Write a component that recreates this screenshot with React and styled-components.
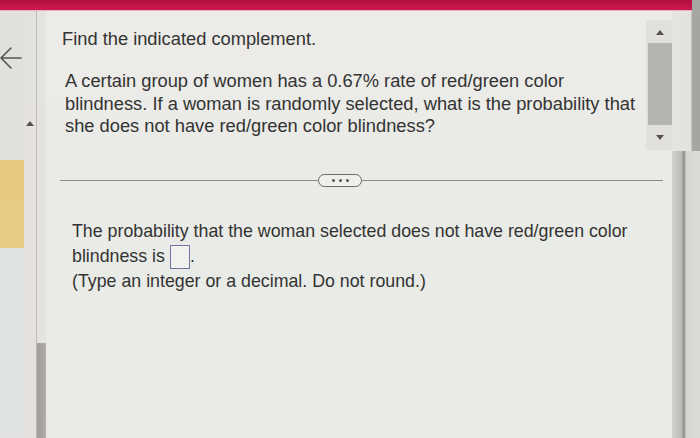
import styled, { createGlobalStyle } from "styled-components"

const GlobalStyle = createGlobalStyle`
    html, body {
        margin: 0;
        padding: 0;
        background: #a8a6a2;
    }
    * {
        box-sizing: border-box;
    }
`

const Pagina = styled.div`
    width: 700px;
    height: 438px;
    overflow: hidden;
    display: flex;
    flex-direction: column;
    font-family: "Liberation Sans", Arial, sans-serif;
    color: #333333;
    background: #a8a6a2;
`

const BarraVermelha = styled.div`
    height: 11px;
    margin-right: 8px;
    background: linear-gradient(to bottom, #b0103f, #c8184d 80%);
    border-bottom: 1px solid #e9b3c0;
    flex-shrink: 0;
`

const Corpo = styled.div`
    flex: 1;
    display: flex;
    min-height: 0;
`

const TrilhoEsquerdo = styled.div`
    width: 46px;
    display: flex;
    flex-shrink: 0;
`

const ColunaSeta = styled.div`
    width: 24px;
    padding-top: 35px;
    background:
        linear-gradient(to bottom, transparent 149px, #e7c97e 149px, #e9cd86 237px, transparent 237px),
        linear-gradient(to bottom, #e2e1de 0, #e0dfdb 237px, #dde2e2 237px, #e0e3e2 100%);
`

const ColunaTrilho = styled.div`
    width: 13px;
    background: linear-gradient(to bottom, #e3e2df 94px, #e8e2de 94px, #e6e0dc 100%);
    padding-top: 110px;
    display: flex;
    justify-content: center;
    border-right: 1px solid #bdbbb7;
`

const ColunaPolegar = styled.div`
    width: 9px;
    display: flex;
    flex-direction: column;
    justify-content: flex-end;
    background: #e4e3e0;
`

const PolegarEsquerdo = styled.div`
    height: 95px;
    background: linear-gradient(to right, #9f9c98, #b1aeaa);
`

const Triangulo = styled.div`
    width: 0;
    height: 0;
    border-left: 4px solid transparent;
    border-right: 4px solid transparent;
    ${({ $baixo }) => $baixo
        ? "border-top: 5px solid #55524f;"
        : "border-bottom: 5px solid #55524f;"}
`

const Principal = styled.div`
    flex: 1;
    display: flex;
    flex-direction: column;
    background: linear-gradient(to bottom, #ecebe8, #e9ebe7 60%, #e8eae6);
    min-width: 0;
`

const LinhaPergunta = styled.div`
    display: flex;
    align-items: flex-start;
`

const TextoPergunta = styled.div`
    flex: 1;
    padding-left: 16px;
    padding-top: 17px;
`

const Titulo = styled.h1`
    margin: 0;
    font-size: 18.3px;
    font-weight: 400;
    line-height: 22px;
    white-space: nowrap;
`

const Enunciado = styled.p`
    margin: 20px 0 0 3px;
    font-size: 18.3px;
    line-height: 22.5px;
    white-space: nowrap;
`

const BarraRolagem = styled.div`
    width: 27px;
    height: 130px;
    margin-top: 9px;
    margin-right: -1px;
    background: #e2e0dc;
    display: flex;
    flex-direction: column;
    align-items: center;
    padding-top: 10px;
`

const PolegarDireito = styled.div`
    width: 25px;
    align-self: flex-end;
    height: 82px;
    margin: 8px 0 10px;
    background: #b6b4b0;
`

const LinhaDivisoria = styled.div`
    display: flex;
    align-items: center;
    margin: 24px 9px 0 14px;
`

const Traco = styled.div`
    flex: ${({ $largura }) => ($largura ? `0 0 ${$largura}px` : "1")};
    height: 1.5px;
    background: #8d8c89;
`

const Pilula = styled.button`
    width: 44px;
    height: 13px;
    padding: 0;
    border: 1.5px solid #6a6a6a;
    border-radius: 7px;
    background: #efefec;
    display: flex;
    align-items: center;
    justify-content: center;
    gap: 4px;
`

const Ponto = styled.span`
    width: 3px;
    height: 3px;
    border-radius: 50%;
    background: #555;
`

const Resposta = styled.div`
    margin: 32px 0 0 26px;
    font-size: 17.8px;
    line-height: 24.5px;
    white-space: nowrap;
`

const Caixa = styled.span`
    display: inline-block;
    vertical-align: top;
    width: 20px;
    height: 24px;
    margin: 1px 0 0 5px;
    border: 1px solid #7676a8;
    background: #f1f1ee;
`

const BordaDireita = styled.div`
    width: 28px;
    display: flex;
    flex-direction: column;
    flex-shrink: 0;
`

const BordaTopo = styled.div`
    height: 140px;
    background: linear-gradient(to right, #e6e4e0 0, #e4e2de 19px, #aaa8a4 20px, #a6a4a0 100%);
`

const BordaBaixo = styled.div`
    flex: 1;
    background: linear-gradient(to right, #d4d2ce 0, #bebcb8 9px, #a9a7a3 11px, #858380 12px, #d6d5d2 14px, #dcdbd8 100%);
`

const SetaVoltar = () => (
    <svg width="24" height="24" viewBox="0 0 24 24" fill="none">
        <path d="M1 12 H21 M11 2 L1 12 L11 22" stroke="#555" strokeWidth="1.6" strokeLinecap="round" strokeLinejoin="round" />
    </svg>
)

const App = () => {
    return (
        <Pagina>
            <GlobalStyle />
            <BarraVermelha />
            <Corpo>
                <TrilhoEsquerdo>
                    <ColunaSeta>
                        <SetaVoltar />
                    </ColunaSeta>
                    <ColunaTrilho>
                        <Triangulo />
                    </ColunaTrilho>
                    <ColunaPolegar>
                        <PolegarEsquerdo />
                    </ColunaPolegar>
                </TrilhoEsquerdo>
                <Principal>
                    <LinhaPergunta>
                        <TextoPergunta>
                            <Titulo>Find the indicated complement.</Titulo>
                            <Enunciado>
                                A certain group of women has a 0.67% rate of red/green color<br />
                                blindness. If a woman is randomly selected, what is the probability that<br />
                                she does not have red/green color blindness?
                            </Enunciado>
                        </TextoPergunta>
                        <BarraRolagem>
                            <Triangulo />
                            <PolegarDireito />
                            <Triangulo $baixo />
                        </BarraRolagem>
                    </LinhaPergunta>
                    <LinhaDivisoria>
                        <Traco $largura={258} />
                        <Pilula aria-label="more">
                            <Ponto /><Ponto /><Ponto />
                        </Pilula>
                        <Traco />
                    </LinhaDivisoria>
                    <Resposta>
                        The probability that the woman selected does not have red/green color<br />
                        blindness is<Caixa />.<br />
                        (Type an integer or a decimal. Do not round.)
                    </Resposta>
                </Principal>
                <BordaDireita>
                    <BordaTopo />
                    <BordaBaixo />
                </BordaDireita>
            </Corpo>
        </Pagina>
    )
}

export default App
